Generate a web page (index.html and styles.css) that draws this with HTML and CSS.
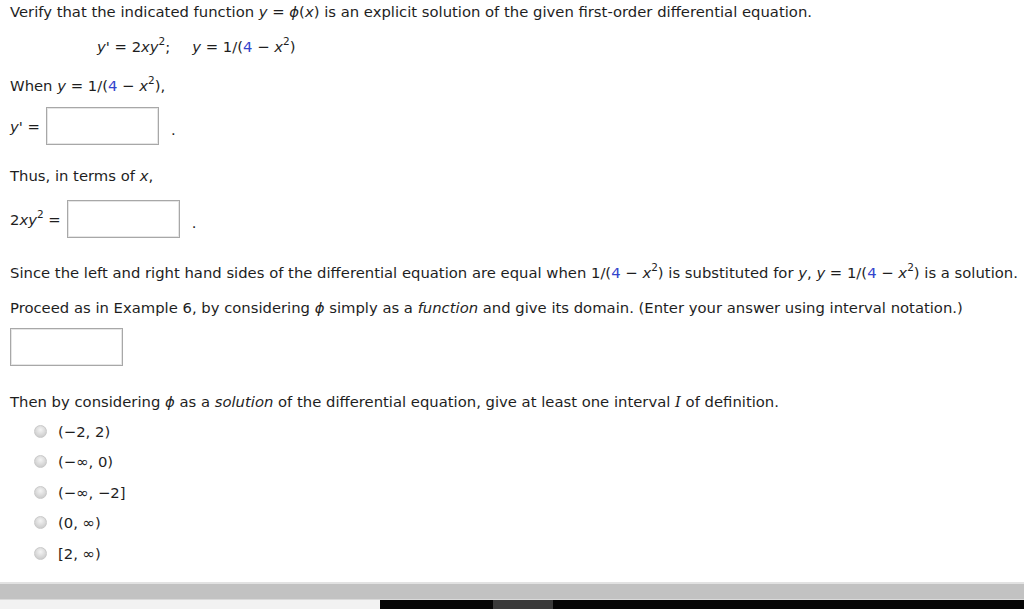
FILE: index.html
```html
<!DOCTYPE html>
<html>
<head>
<meta charset="utf-8">
<link rel="stylesheet" href="styles.css">
</head>
<body>
<div class="page">
  <p class="line l1">Verify that the indicated function <i>y</i> = <i>&#981;</i>(<i>x</i>) is an explicit solution of the given first-order differential equation.</p>
  <p class="line eq"><i>y</i>' = 2<i>xy</i><sup>2</sup>;<span class="gap"></span><i>y</i> = 1/(<span class="blue">4</span> &minus; <i>x</i><sup>2</sup>)</p>
  <p class="line when">When <i>y</i> = 1/(<span class="blue">4</span> &minus; <i>x</i><sup>2</sup>),</p>
  <div class="row r1"><span class="lbl"><i>y</i>' =</span><span class="box"></span><span class="dot">.</span></div>
  <p class="line thus">Thus, in terms of <i>x</i>,</p>
  <div class="row r2"><span class="lbl">2<i>xy</i><sup>2</sup> =</span><span class="box"></span><span class="dot">.</span></div>
  <p class="line since">Since the left and right hand sides of the differential equation are equal when 1/(<span class="blue">4</span> &minus; <i>x</i><sup>2</sup>) is substituted for <i>y</i>, <i>y</i> = 1/(<span class="blue">4</span> &minus; <i>x</i><sup>2</sup>) is a solution.</p>
  <p class="line proceed">Proceed as in Example 6, by considering <i>&#981;</i> simply as a <i>function</i> and give its domain. (Enter your answer using interval notation.)</p>
  <div class="box solo"></div>
  <p class="line then">Then by considering <i>&#981;</i> as a <i>solution</i> of the differential equation, give at least one interval <i class="serif">I</i> of definition.</p>
  <ul class="opts">
    <li><span class="radio"></span>(&minus;2, 2)</li>
    <li><span class="radio"></span>(&minus;&infin;, 0)</li>
    <li><span class="radio"></span>(&minus;&infin;, &minus;2]</li>
    <li><span class="radio"></span>(0, &infin;)</li>
    <li><span class="radio"></span>[2, &infin;)</li>
  </ul>
</div>
<div class="bottom">
  <div class="sep"></div>
  <div class="bar"></div>
  <div class="sep2"></div>
  <div class="foot"><div class="fl"></div><div class="fd1"></div><div class="fg"></div><div class="fd2"></div></div>
</div>
</body>
</html>
```
FILE: styles.css
```css
html, body { margin: 0; padding: 0; background: #fff; }
body { font-family: "DejaVu Sans", Verdana, sans-serif; font-size: 14.8px; color: #1e1e1e; width: 1024px; height: 609px; overflow: hidden; position: relative; }
.page { padding-left: 10px; height: 582px; }
.line { margin: 0; line-height: 24px; white-space: nowrap; }
sup { font-size: 10.5px; line-height: 0; vertical-align: 7px; }
.blue { color: #3344cc; }
.serif { font-family: "DejaVu Serif", serif; }
.l1 { padding-top: 0; }
.eq { margin-top: 11px; padding-left: 87px; }
.gap { display: inline-block; width: 22px; }
.when { margin-top: 15px; }
.row { display: flex; align-items: center; height: 40px; }
.r1 { margin-top: 8px; }
.lbl { margin-right: 6px; }
.box { display: block; width: 111px; height: 36px; border: 1px solid #a8a8a8; box-shadow: inset 0 0 0 1px #e6e6e6; }
.dot { margin-left: 12px; margin-top: 6px; }
.thus { margin-top: 18px; }
.r2 { margin-top: 11px; }
.since { margin-top: 22px; }
.proceed { margin-top: 11px; }
.solo { margin-top: 8px; }
.then { margin-top: 24px; }
.opts { list-style: none; margin: 2px 0 0 0; padding: 0 0 0 24px; }
.opts li { display: flex; align-items: center; height: 30.5px; }
.radio { width: 13px; height: 13px; border-radius: 50%; background: radial-gradient(circle at 50% 35%, #f4f4f4 0%, #d6d6d6 60%, #c4c4c4 100%); border: 1px solid #c9c9c9; box-sizing: border-box; margin-right: 11px; }
.bottom { position: absolute; left: 0; top: 582px; width: 1024px; }
.sep { height: 2px; background: #e2e2e2; }
.bar { height: 15px; background: #c2c2c2; }
.sep2 { height: 1px; background: #dadada; }
.foot { display: flex; height: 9px; }
.fl { width: 380px; background: #f2f2f2; }
.fd1 { width: 113px; background: #050505; }
.fg { width: 60px; background: #3a3a3a; }
.fd2 { flex: 1; background: #050505; }
```
